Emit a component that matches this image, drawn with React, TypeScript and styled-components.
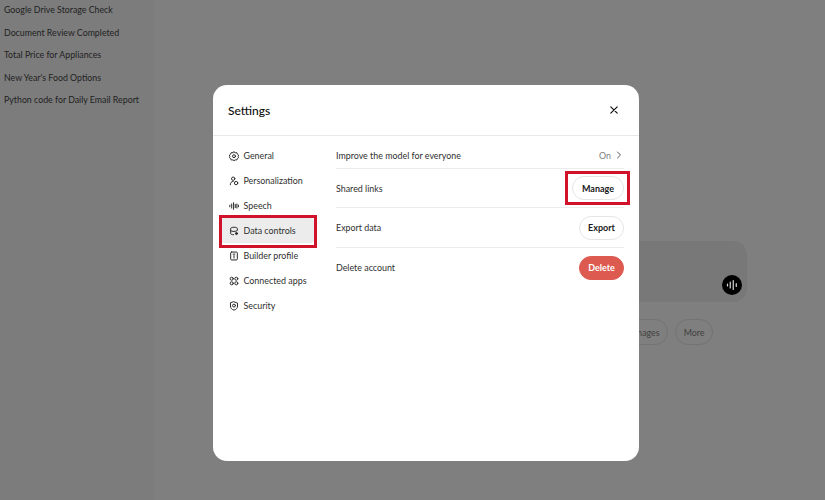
import React from "react";
import styled, { createGlobalStyle } from "styled-components";

const Global = createGlobalStyle`
  html, body { margin: 0; padding: 0; width: 825px; height: 500px; overflow: hidden; }
  * { box-sizing: border-box; }
  body { font-family: "Lato", "Noto Sans", sans-serif; }
`;

const Page = styled.div`
  position: relative;
  display: flex;
  width: 825px;
  height: 500px;
  background: #7f7f7f;
  overflow: hidden;
`;
const Sidebar = styled.aside`
  width: 154px;
  flex: none;
  background: #7c7c7c;
  display: flex;
  flex-direction: column;
`;
const Chat = styled.div`
  height: 22.5px;
  line-height: 19px;
  padding-left: 4px;
  font-size: 8.8px;
  color: #1f1f1f;
  white-space: nowrap;
`;
const Main = styled.main`
  flex: 1;
  padding: 241px 78px 0 0;
  display: flex;
  flex-direction: column;
  align-items: flex-end;
`;
const Composer = styled.div`
  width: 420px;
  height: 61px;
  border-radius: 14px;
  background: #787878;
  display: flex;
  align-items: flex-end;
  justify-content: flex-end;
  padding: 0 5px 7px 0;
`;
const VoiceButton = styled.div`
  width: 20px;
  height: 20px;
  border-radius: 50%;
  background: #000;
  display: flex;
  align-items: center;
  justify-content: center;
`;
const Pills = styled.div`
  display: flex;
  gap: 7px;
  margin: 17px 34px 0 0;
`;
const Pill = styled.div`
  height: 26px;
  padding: 0 7.5px;
  border: 1px solid #737373;
  border-radius: 13px;
  display: flex;
  align-items: center;
  font-size: 8.9px;
  color: #3f3f3f;
`;
const Modal = styled.section`
  position: absolute;
  left: 213px;
  top: 85px;
  width: 426px;
  height: 376px;
  background: #fff;
  border-radius: 14px;
  display: flex;
  flex-direction: column;
`;
const Header = styled.header`
  height: 51px;
  flex: none;
  border-bottom: 1px solid #e8e8e8;
  padding: 0 20px 0 15px;
  display: flex;
  align-items: center;
  justify-content: space-between;
`;
const Title = styled.h2`
  margin: 0;
  font-size: 12px;
  font-weight: 500;
  color: #0d0d0d;
`;
const Close = styled.div`
  width: 10px;
  height: 10px;
  display: flex;
`;
const Body = styled.div`
  flex: 1;
  display: flex;
`;
const Nav = styled.nav`
  width: 123px;
  flex: none;
  padding: 7px 0 0 7px;
  display: flex;
  flex-direction: column;
`;
const NavItem = styled.div<{ $active?: boolean }>`
  height: 25px;
  width: 94px;
  padding-left: 9px;
  display: flex;
  align-items: center;
  gap: 4.5px;
  border-radius: 4px;
  font-size: 8.9px;
  color: #2f2f2f;
  background: ${(p) => (p.$active ? "#ececec" : "transparent")};
  svg { flex: none; }
`;
const Content = styled.div`
  width: 288px;
  display: flex;
  flex-direction: column;
`;
const Row = styled.div<{ $h: number; $last?: boolean; $top?: number }>`
  height: ${(p) => p.$h}px;
  padding-top: ${(p) => p.$top ?? 0}px;
  display: flex;
  align-items: center;
  justify-content: space-between;
  font-size: 8.9px;
  color: #2f2f2f;
  border-bottom: ${(p) => (p.$last ? "none" : "1px solid #ececec")};
`;
const Value = styled.div`
  display: flex;
  align-items: center;
  gap: 4px;
  color: #7d7d7d;
  padding-right: 1px;
`;
const Btn = styled.div<{ $danger?: boolean; $w: number }>`
  width: ${(p) => p.$w}px;
  height: 24px;
  border-radius: 12px;
  display: flex;
  align-items: center;
  justify-content: center;
  font-size: 9px;
  font-weight: 700;
  color: ${(p) => (p.$danger ? "#fff" : "#1a1a1a")};
  background: ${(p) => (p.$danger ? "#dd5a50" : "#fff")};
  border: 1px solid ${(p) => (p.$danger ? "#dd5a50" : "#e5e5e5")};
`;
const Highlight = styled.div`
  position: absolute;
  border: 3px solid #d0132a;
  pointer-events: none;
`;

const Ic = ({ children }: { children: React.ReactNode }) => (
  <svg width="10" height="10" viewBox="0 0 24 24" fill="none" stroke="#2a2a2a" strokeWidth="2.4" strokeLinecap="round" strokeLinejoin="round">
    {children}
  </svg>
);

const items: { label: string; active?: boolean; icon: React.ReactNode }[] = [
  { label: "General", icon: <><path d="M12 2l3 2.2 3.8-.2 1.2 3.5 3 2.3L22 13.5l1 2.5-3 2.2-1.2 3.3-3.8-.2L12 23l-3-1.7-3.8.2L4 18.2 1 16l1-2.5-1-3.7 3-2.3L5.2 4 9 4.2z" /><circle cx="12" cy="12.5" r="3.5" /></> },
  { label: "Personalization", icon: <><circle cx="10" cy="6.5" r="4" /><path d="M3 21c0-5 3-8 7-8" /><circle cx="17" cy="17" r="4" /></> },
  { label: "Speech", icon: <path d="M2 10v4M6.5 7v10M11 4v16M15 8v8M19 7v10M22.5 10v4" /> },
  { label: "Data controls", active: true, icon: <><path d="M20 10V6c0-2-3.5-3-8-3S4 4 4 6v12c0 2 3.5 3 7 3" /><path d="M4 11c1.5 1.5 5 2 8 2s5-.5 7-1.5" /><circle cx="18" cy="18" r="2.5" fill="#2a2a2a" /></> },
  { label: "Builder profile", icon: <><rect x="4" y="2.5" width="16" height="19" rx="2.5" /><path d="M12 11v6M10 7.5h4" /></> },
  { label: "Connected apps", icon: <><circle cx="6.5" cy="6.5" r="3.7" /><circle cx="17.5" cy="6.5" r="3.7" /><circle cx="6.5" cy="17.5" r="3.7" /><circle cx="17.5" cy="17.5" r="3.7" /></> },
  { label: "Security", icon: <><path d="M12 2l8.5 3v7c0 5-3.5 8.5-8.5 10-5-1.5-8.5-5-8.5-10V5z" /><circle cx="12" cy="11" r="3.5" /></> },
];

const chats = [
  "Google Drive Storage Check",
  "Document Review Completed",
  "Total Price for Appliances",
  "New Year's Food Options",
  "Python code for Daily Email Report",
];

export default function App() {
  return (
    <Page>
      <Global />
      <Sidebar>
        {chats.map((c) => (
          <Chat key={c}>{c}</Chat>
        ))}
      </Sidebar>
      <Main>
        <Composer>
          <VoiceButton>
            <svg width="12" height="12" viewBox="0 0 24 24" stroke="#d8d8d8" strokeWidth="2.4" strokeLinecap="round">
              <path d="M3 10v4M8.5 6v12M14.5 3v18M20.5 9v6" />
            </svg>
          </VoiceButton>
        </Composer>
        <Pills>
          <Pill>Images</Pill>
          <Pill>More</Pill>
        </Pills>
      </Main>
      <Modal>
        <Header>
          <Title>Settings</Title>
          <Close>
            <svg width="10" height="10" viewBox="0 0 10 10" stroke="#111" strokeWidth="1.2" strokeLinecap="round">
              <path d="M1.8 1.8l6.4 6.4M8.2 1.8L1.8 8.2" />
            </svg>
          </Close>
        </Header>
        <Body>
          <Nav>
            {items.map((i) => (
              <NavItem key={i.label} $active={i.active}>
                <Ic>{i.icon}</Ic>
                {i.label}
              </NavItem>
            ))}
          </Nav>
          <Content>
            <Row $h={33} $top={6}>
              Improve the model for everyone
              <Value>
                On
                <svg width="8" height="8" viewBox="0 0 8 8" fill="none" stroke="#555" strokeWidth="1" strokeLinecap="round" strokeLinejoin="round">
                  <path d="M2.5 1l3 3-3 3" />
                </svg>
              </Value>
            </Row>
            <Row $h={39}>
              Shared links
              <Btn $w={52}>Manage</Btn>
            </Row>
            <Row $h={40}>
              Export data
              <Btn $w={45}>Export</Btn>
            </Row>
            <Row $h={39} $last>
              Delete account
              <Btn $danger $w={45}>Delete</Btn>
            </Row>
          </Content>
        </Body>
      </Modal>
      <Highlight style={{ left: 565, top: 171, width: 65, height: 34 }} />
      <Highlight style={{ left: 219, top: 215, width: 98, height: 33 }} />
    </Page>
  );
}
